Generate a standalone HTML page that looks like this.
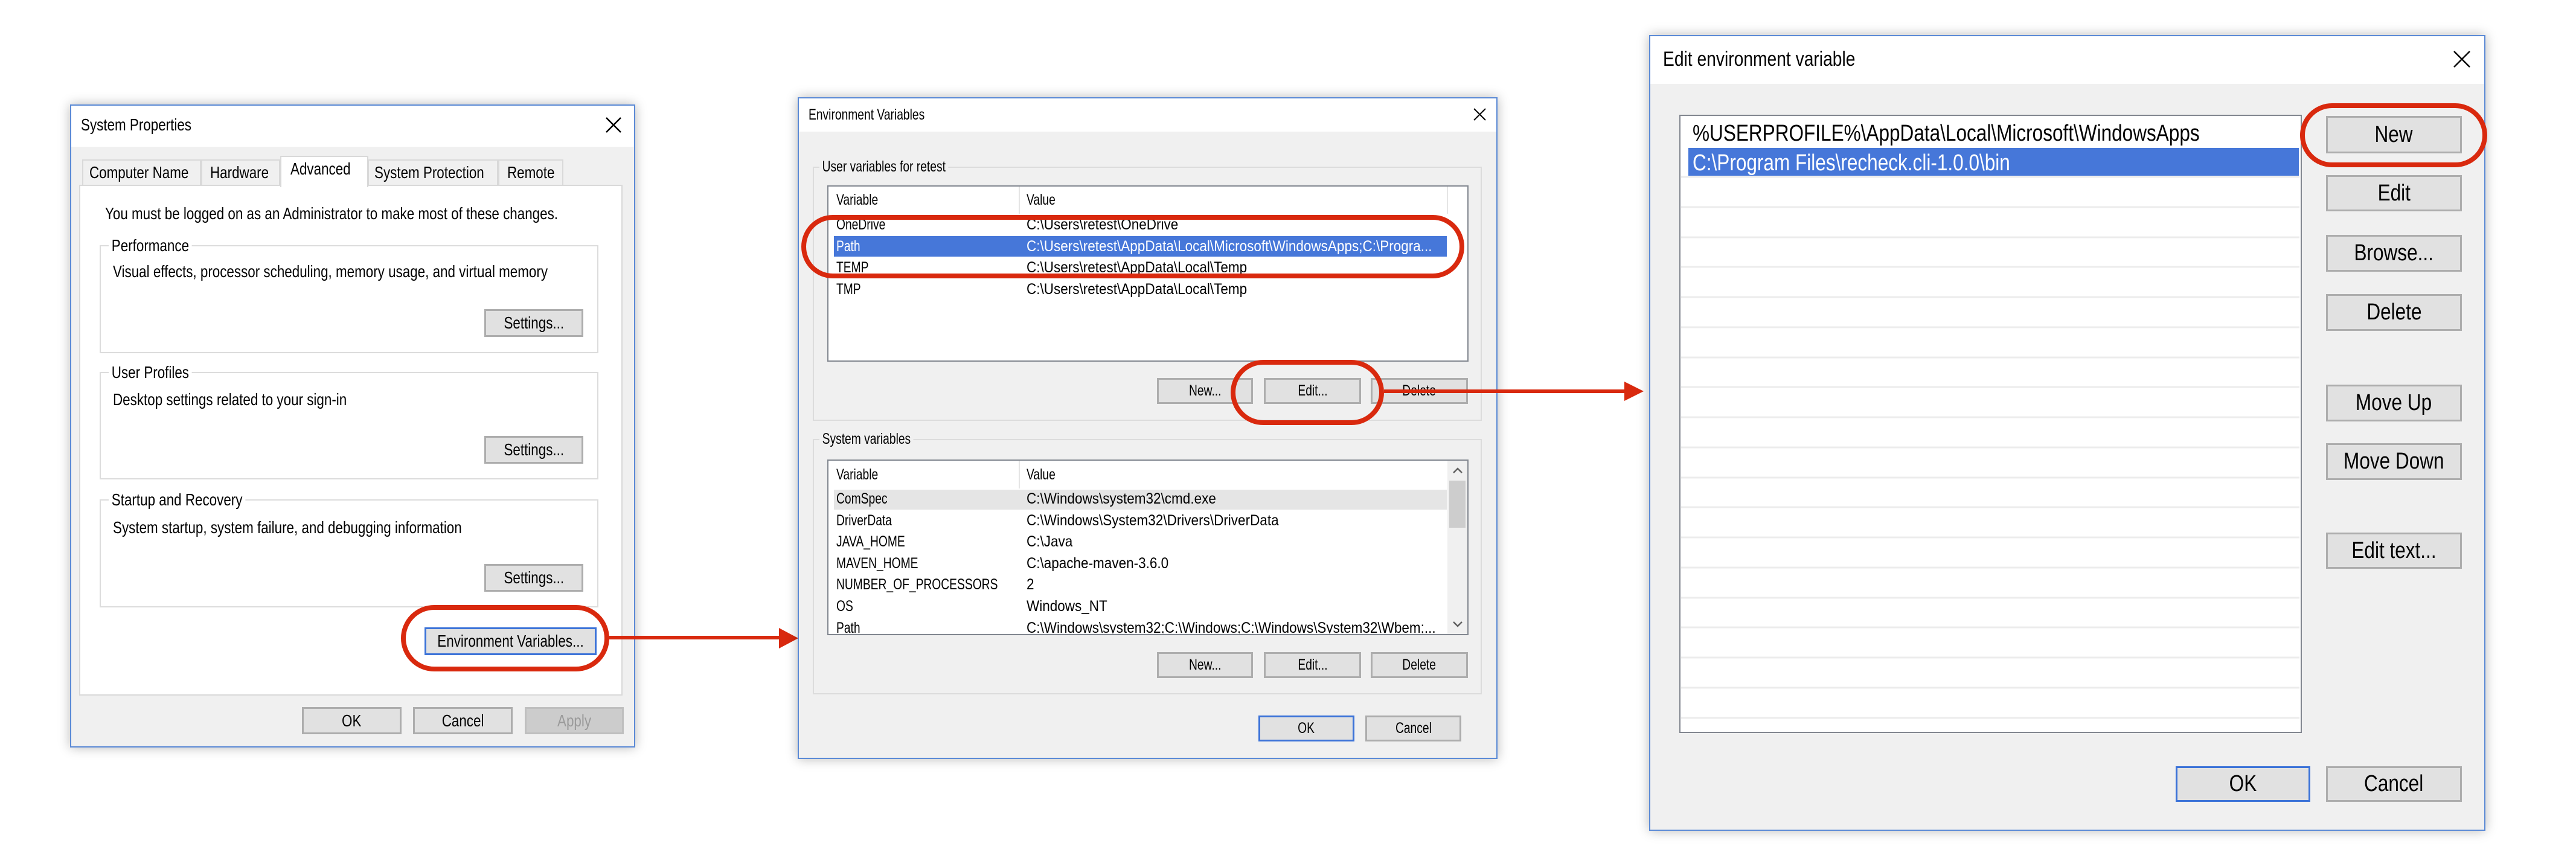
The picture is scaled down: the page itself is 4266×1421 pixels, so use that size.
<!DOCTYPE html>
<html><head><meta charset="utf-8"><style>
*{margin:0;padding:0;box-sizing:border-box}
body{width:4266px;height:1421px;background:#fff;position:relative;overflow:hidden;font-family:"Liberation Sans",sans-serif;color:#000}
div{position:absolute}
.dlg{background:#f0f0f0;border:2px solid #5b8ad6;box-shadow:0 0 18px rgba(0,0,0,.28)}
.tb{background:#fff}
.t{white-space:nowrap;line-height:1;transform-origin:0 50%}
.btn{background:#e1e1e1;border:3px solid #adadad;display:flex;align-items:center;justify-content:center;white-space:nowrap}
.btn span{display:inline-block;transform-origin:50% 50%}
.grp{border:2px solid #dcdcdc}
.red{border:8px solid #d9290e}
.d1 .t,.d1 .btn span{transform:scaleX(.8);font-size:28px}
.d2 .t,.d2 .btn span{transform:scaleX(.77);font-size:25px}
.d2 .t.v{transform:scaleX(.9)}
.d3 .t,.d3 .btn span{transform:scaleX(.83);font-size:38px}
.d1 .t{transform-origin:0 50%}
</style></head><body>

<!-- Dialog 1 -->
<div class="d1">
<div class="dlg" style="left:116px;top:173px;width:936px;height:1065px"></div>
<div class="tb" style="left:118px;top:175px;width:932px;height:68px"></div>
<div class="t" style="left:134px;top:193px">System Properties</div>
<svg style="position:absolute;left:1003px;top:194px" width="26" height="26"><path d="M1 1L25 25M25 1L1 25" stroke="#000" stroke-width="2.5"/></svg>
<div style="left:136px;top:264px;width:197px;height:44px;background:#f0f0f0;border:2px solid #d9d9d9"></div>
<div style="left:333px;top:264px;width:131px;height:44px;background:#f0f0f0;border:2px solid #d9d9d9"></div>
<div style="left:609px;top:264px;width:216px;height:44px;background:#f0f0f0;border:2px solid #d9d9d9"></div>
<div style="left:825px;top:264px;width:108px;height:44px;background:#f0f0f0;border:2px solid #d9d9d9"></div>
<div style="left:131px;top:306px;width:900px;height:846px;background:#fff;border:2px solid #d9d9d9"></div>
<div style="left:464px;top:258px;width:146px;height:52px;background:#fff;border:2px solid #d9d9d9;border-bottom:none"></div>
<div class="t" style="left:148px;top:272px">Computer Name</div>
<div class="t" style="left:348px;top:272px">Hardware</div>
<div class="t" style="left:481px;top:266px">Advanced</div>
<div class="t" style="left:620px;top:272px">System Protection</div>
<div class="t" style="left:840px;top:272px">Remote</div>
<div class="t" style="left:174px;top:340px">You must be logged on as an Administrator to make most of these changes.</div>

<div class="grp" style="left:165px;top:406px;width:826px;height:179px"></div>
<div class="t" style="left:180px;top:393px;background:#fff;padding:0 6px">Performance</div>
<div class="t" style="left:187px;top:436px">Visual effects, processor scheduling, memory usage, and virtual memory</div>
<div class="btn" style="left:802px;top:512px;width:164px;height:46px"><span>Settings...</span></div>

<div class="grp" style="left:165px;top:616px;width:826px;height:178px"></div>
<div class="t" style="left:180px;top:603px;background:#fff;padding:0 6px">User Profiles</div>
<div class="t" style="left:187px;top:648px">Desktop settings related to your sign-in</div>
<div class="btn" style="left:802px;top:722px;width:164px;height:46px"><span>Settings...</span></div>

<div class="grp" style="left:165px;top:827px;width:826px;height:179px"></div>
<div class="t" style="left:180px;top:814px;background:#fff;padding:0 6px">Startup and Recovery</div>
<div class="t" style="left:187px;top:860px">System startup, system failure, and debugging information</div>
<div class="btn" style="left:802px;top:934px;width:164px;height:46px"><span>Settings...</span></div>

<div class="btn" style="left:703px;top:1039px;width:285px;height:46px;border-color:#3c73d8"><span>Environment Variables...</span></div>
<div class="red" style="left:664px;top:1002px;width:345px;height:110px;border-radius:55px"></div>

<div class="btn" style="left:500px;top:1171px;width:165px;height:45px"><span>OK</span></div>
<div class="btn" style="left:684px;top:1171px;width:165px;height:45px"><span>Cancel</span></div>
<div class="btn" style="left:869px;top:1171px;width:164px;height:45px;background:#cccccc;border-color:#bfbfbf;color:#9a9a9a"><span>Apply</span></div>
</div>

<div style="left:1009px;top:1053px;width:296px;height:6px;background:#d9290e"></div>
<svg style="position:absolute;left:1290px;top:1040px" width="34" height="34"><path d="M0 0L32 17L0 34Z" fill="#d9290e"/></svg>

<!-- Dialog 2 -->
<div class="d2">
<div class="dlg" style="left:1321px;top:161px;width:1159px;height:1096px"></div>
<div class="tb" style="left:1323px;top:163px;width:1155px;height:55px"></div>
<div class="t" style="left:1339px;top:178px">Environment Variables</div>
<svg style="position:absolute;left:2440px;top:179px" width="21" height="21"><path d="M1 1L20 20M20 1L1 20" stroke="#000" stroke-width="2"/></svg>

<div class="grp" style="left:1346px;top:276px;width:1108px;height:421px"></div>
<div class="t" style="left:1357px;top:264px;background:#f0f0f0;padding:0 6px">User variables for retest</div>
<div style="left:1370px;top:307px;width:1062px;height:292px;background:#fff;border:2px solid #828790"></div>
<div style="left:1687px;top:309px;width:2px;height:45px;background:#e5e5e5"></div>
<div style="left:2396px;top:309px;width:2px;height:45px;background:#e5e5e5"></div>
<div class="t" style="left:1385px;top:319px">Variable</div>
<div class="t" style="left:1700px;top:319px">Value</div>
<div style="left:1381px;top:391px;width:1015px;height:34px;background:#4677d9"></div>
<div class="t" style="left:1385px;top:360px">OneDrive</div>
<div class="t v" style="left:1700px;top:360px">C:\Users\retest\OneDrive</div>
<div class="t" style="left:1385px;top:396px;color:#fff">Path</div>
<div class="t v" style="left:1700px;top:396px;color:#fff">C:\Users\retest\AppData\Local\Microsoft\WindowsApps;C:\Progra...</div>
<div class="t" style="left:1385px;top:431px">TEMP</div>
<div class="t v" style="left:1700px;top:431px">C:\Users\retest\AppData\Local\Temp</div>
<div class="t" style="left:1385px;top:467px">TMP</div>
<div class="t v" style="left:1700px;top:467px">C:\Users\retest\AppData\Local\Temp</div>
<div class="btn" style="left:1916px;top:626px;width:159px;height:43px"><span>New...</span></div>
<div class="btn" style="left:2093px;top:626px;width:161px;height:43px"><span>Edit...</span></div>
<div class="btn" style="left:2270px;top:626px;width:161px;height:43px"><span>Delete</span></div>
<div class="red" style="left:1327px;top:356px;width:1098px;height:105px;border-radius:52px/50%"></div>
<div class="red" style="left:2038px;top:596px;width:254px;height:108px;border-radius:54px/50%"></div>

<div class="grp" style="left:1346px;top:727px;width:1108px;height:423px"></div>
<div class="t" style="left:1357px;top:715px;background:#f0f0f0;padding:0 6px">System variables</div>
<div style="left:1370px;top:761px;width:1062px;height:291px;background:#fff;border:2px solid #828790;overflow:hidden"></div>
<div style="left:1687px;top:763px;width:2px;height:46px;background:#e5e5e5"></div>
<div style="left:1381px;top:811px;width:1015px;height:33px;background:#e5e5e5"></div>
<div style="left:2397px;top:763px;width:33px;height:287px;background:#f0f0f0"></div>
<div style="left:2400px;top:796px;width:27px;height:78px;background:#cdcdcd"></div>
<svg style="position:absolute;left:2405px;top:773px" width="18" height="12"><path d="M2 10L9 3L16 10" stroke="#606060" stroke-width="2.5" fill="none"/></svg>
<svg style="position:absolute;left:2405px;top:1028px" width="18" height="12"><path d="M2 2L9 9L16 2" stroke="#606060" stroke-width="2.5" fill="none"/></svg>
<div class="t" style="left:1385px;top:774px">Variable</div>
<div class="t" style="left:1700px;top:774px">Value</div>
<div class="t" style="left:1385px;top:814px">ComSpec</div><div class="t v" style="left:1700px;top:814px">C:\Windows\system32\cmd.exe</div>
<div class="t" style="left:1385px;top:850px">DriverData</div><div class="t v" style="left:1700px;top:850px">C:\Windows\System32\Drivers\DriverData</div>
<div class="t" style="left:1385px;top:885px">JAVA_HOME</div><div class="t v" style="left:1700px;top:885px">C:\Java</div>
<div class="t" style="left:1385px;top:921px">MAVEN_HOME</div><div class="t v" style="left:1700px;top:921px">C:\apache-maven-3.6.0</div>
<div class="t" style="left:1385px;top:956px">NUMBER_OF_PROCESSORS</div><div class="t v" style="left:1700px;top:956px">2</div>
<div class="t" style="left:1385px;top:992px">OS</div><div class="t v" style="left:1700px;top:992px">Windows_NT</div>
<div style="left:1372px;top:1015px;width:1024px;height:34px;overflow:hidden">
<div class="t" style="left:13px;top:13px">Path</div><div class="t v" style="left:328px;top:13px">C:\Windows\system32;C:\Windows;C:\Windows\System32\Wbem;...</div></div>
<div class="btn" style="left:1916px;top:1080px;width:159px;height:43px"><span>New...</span></div>
<div class="btn" style="left:2093px;top:1080px;width:161px;height:43px"><span>Edit...</span></div>
<div class="btn" style="left:2270px;top:1080px;width:161px;height:43px"><span>Delete</span></div>
<div class="btn" style="left:2084px;top:1185px;width:159px;height:43px;border-color:#3c73d8"><span>OK</span></div>
<div class="btn" style="left:2261px;top:1185px;width:159px;height:43px"><span>Cancel</span></div>
</div>

<div style="left:2292px;top:645px;width:410px;height:6px;background:#d9290e"></div>
<svg style="position:absolute;left:2690px;top:632px" width="34" height="34"><path d="M0 0L32 16L0 32Z" fill="#d9290e"/></svg>

<!-- Dialog 3 -->
<div class="d3">
<div class="dlg" style="left:2731px;top:58px;width:1385px;height:1318px"></div>
<div class="tb" style="left:2733px;top:60px;width:1381px;height:79px"></div>
<div class="t" style="left:2754px;top:81px;font-size:34px!important">Edit environment variable</div>
<svg style="position:absolute;left:4063px;top:84px" width="28" height="28"><path d="M1 1L27 27M27 1L1 27" stroke="#000" stroke-width="2.5"/></svg>
<div style="left:2781px;top:190px;width:1031px;height:1024px;background:#fff;border:2px solid #828790"></div>
<svg style="position:absolute;left:2784px;top:290px" width="1024" height="920">
<g stroke="#ececec" stroke-width="3">
<path d="M0 3H1024M0 53H1024M0 103H1024M0 152H1024M0 202H1024M0 252H1024M0 302H1024M0 351H1024M0 401H1024M0 451H1024M0 501H1024M0 550H1024M0 600H1024M0 650H1024M0 700H1024M0 749H1024M0 799H1024M0 849H1024M0 899H1024"/></g></svg>
<div style="left:2796px;top:245px;width:1011px;height:46px;background:#4677d9"></div>
<div class="t" style="left:2803px;top:202px">%USERPROFILE%\AppData\Local\Microsoft\WindowsApps</div>
<div class="t" style="left:2803px;top:251px;color:#fff">C:\Program Files\recheck.cli-1.0.0\bin</div>
<div class="btn" style="left:3852px;top:192px;width:225px;height:62px"><span>New</span></div>
<div class="btn" style="left:3852px;top:290px;width:225px;height:60px"><span>Edit</span></div>
<div class="btn" style="left:3852px;top:389px;width:225px;height:61px"><span>Browse...</span></div>
<div class="btn" style="left:3852px;top:487px;width:225px;height:61px"><span>Delete</span></div>
<div class="btn" style="left:3852px;top:637px;width:225px;height:61px"><span>Move Up</span></div>
<div class="btn" style="left:3852px;top:734px;width:225px;height:61px"><span>Move Down</span></div>
<div class="btn" style="left:3852px;top:882px;width:225px;height:60px"><span>Edit text...</span></div>
<div class="btn" style="left:3603px;top:1269px;width:223px;height:59px;border-color:#3c73d8"><span>OK</span></div>
<div class="btn" style="left:3852px;top:1269px;width:225px;height:59px"><span>Cancel</span></div>
<div class="red" style="left:3809px;top:171px;width:310px;height:106px;border-radius:53px/50%"></div>
</div>
</body></html>
